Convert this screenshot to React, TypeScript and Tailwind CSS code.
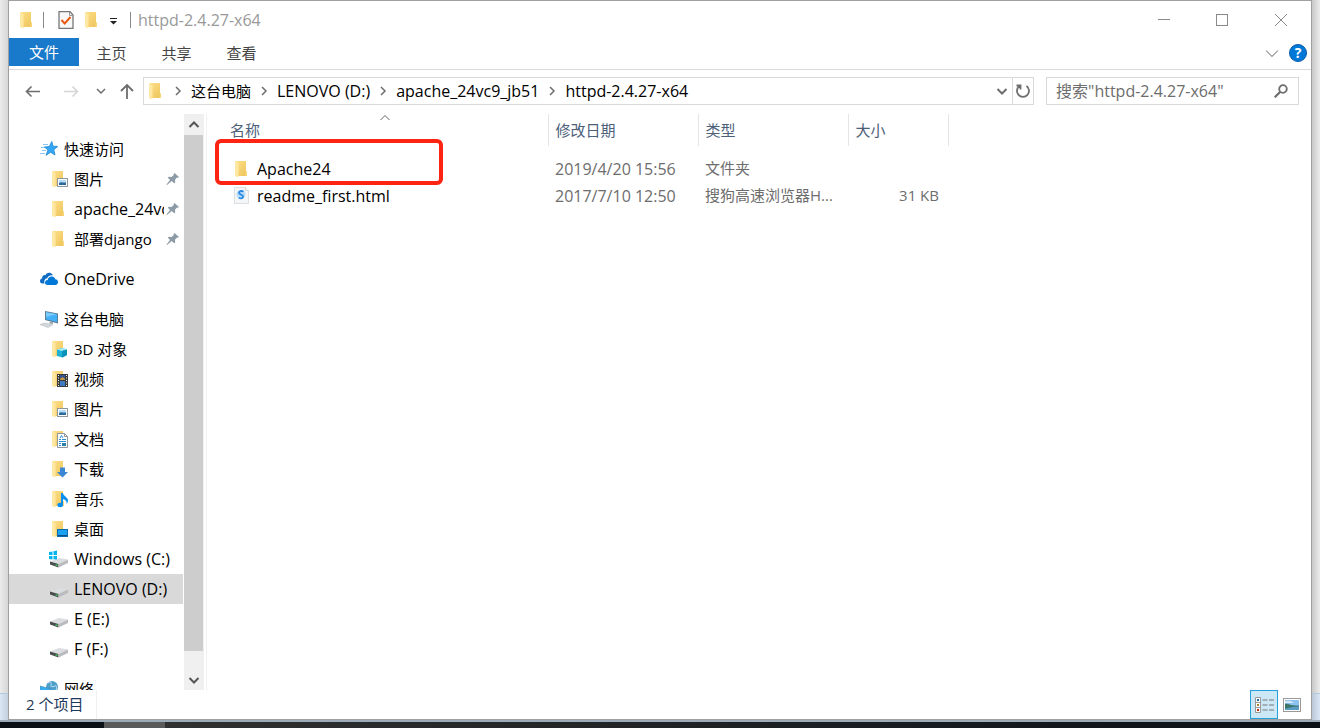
import React, { useState } from 'react';

type Overlay = 'none' | 'picture' | 'cube' | 'film' | 'doc' | 'down' | 'music' | 'desktop';

interface TreeItem {
  id: string;
  label: string;
  icon: React.ReactNode;
  pinned?: boolean;
  latin?: boolean;
}

interface TreeGroup {
  root: TreeItem;
  children: TreeItem[];
}

interface FileRow {
  name: string;
  date: string;
  type: string;
  size: string;
  icon: React.ReactNode;
}

const overlays: Record<Overlay, React.ReactNode> = {
  none: null,
  picture: (
    <g>
      <rect x="7.5" y="8.5" width="10" height="8" fill="#fff" stroke="#8f979e" />
      <rect x="9" y="10" width="7" height="5" fill="#b5dcf8" />
      <path d="M9 13c2-1.500 4 0 7-.5V15H9z" fill="#2d6a9a" />
    </g>
  ),
  cube: (
    <g>
      <path d="M7 9.500l5.500-1.500L17 9.500V15l-4.500 2.500L7 16z" fill="#1fb3d3" />
      <path d="M7 9.500l5.500-1.500L17 9.500l-5 1.500z" fill="#a4ecf5" />
      <path d="M12 11l5-1.500V15l-5 2.500z" fill="#0792b8" />
    </g>
  ),
  film: (
    <g>
      <rect x="7" y="4" width="11" height="13" fill="#3a3a3a" />
      <rect x="10" y="5" width="5" height="5" fill="#33558f" />
      <rect x="10" y="11" width="5" height="5" fill="#3d7cc4" />
      <path d="M10 9l2.500-2 2.500 2v1h-5z" fill="#c7963c" />
      <path d="M8.500 5v12M16.500 5v12" stroke="#fff" strokeDasharray="1 1.500" />
    </g>
  ),
  doc: (
    <g>
      <path d="M7.500 3.500h7l3 3v11h-10z" fill="#fff" stroke="#8f979e" />
      <path d="M14.500 3.500v3h3" fill="none" stroke="#8f979e" />
      <path d="M9 9.500h2M12 9.500h4M9 11.500h7M9 13.500h2M9 15.500h2" stroke="#2a8dd4" />
      <rect x="12" y="13" width="4" height="3" fill="#2b7fa8" />
      <path d="M10 8l1.500-2.500L13 8" fill="none" stroke="#2a8dd4" />
    </g>
  ),
  down: <path d="M10 7.500h5V12h3l-5.500 5.500L7 12h3z" fill="#3c87d3" />,
  music: (
    <g fill="#0a8fee">
      <path d="M11 3h2c0 3 5 4 5 7.500 0 1.500-.7 2.500-1.500 3.500.6-3-1-4-3.500-5v6h-2z" />
      <ellipse cx="10.200" cy="15" rx="2.800" ry="2.200" />
    </g>
  ),
  desktop: (
    <g>
      <rect x="7.500" y="9.500" width="10" height="7" fill="#1ba1f2" stroke="#0c6cae" />
      <path d="M8 15.500h9" stroke="#0a4f88" />
    </g>
  ),
};

const Folder: React.FC<{ overlay?: Overlay }> = ({ overlay = 'none' }) => (
  <svg className="h-[18px] w-[18px] shrink-0" viewBox="0 0 18 18" aria-hidden="true">
    <defs>
      <linearGradient id="folderBody" x1="0" y1="0" x2="1" y2="1">
        <stop offset="0" stopColor="#fddf88" />
        <stop offset="1" stopColor="#edc35a" />
      </linearGradient>
    </defs>
    <path d="M3 1h10v10.500h1V16H3z" fill="url(#folderBody)" />
    <path d="M12.500 11.500H14V16h-1.500z" fill="#f8d679" />
    <path d="M2 1l3.500 2v14.500L2 16z" fill="#ffe8a3" />
    {overlays[overlay]}
  </svg>
);

const Drive: React.FC<{ windows?: boolean }> = ({ windows }) => (
  <svg className="h-[18px] w-[18px] shrink-0 overflow-visible" viewBox="0 0 18 18" aria-hidden="true">
    <path d="M0 11.500l9-3.500 9 1.500-9.500 4.500z" fill="#dcdde0" />
    <path d="M0 11.500l8.500 2.500v3.500L0 14.500z" fill="#4a4c4e" />
    <path d="M8.500 14L18 9.500V13l-9.500 4.500z" fill="#b9bbbe" />
    <path d="M5.500 14.800l2 .6" stroke="#3fd060" strokeWidth="1.300" />
    {windows && (
      <path d="M-1 2l3.500-.6V5H-1zM3.500 1.200L7 .5V5H3.500zM-1 6h3.500v3.400L-1 9zM3.500 6H7v3.600l-3.500-.4z" fill="#00b4f0" />
    )}
  </svg>
);

const Star = () => (
  <svg className="h-[18px] w-[18px] shrink-0" viewBox="0 0 18 18" aria-hidden="true">
    <path d="M3 4.500h5M1 7.500h5M2 10.500h4M0 13.500h5" stroke="#8cc6ee" />
    <path d="M11.800 1.500l1.200 4.700 4.700.3-3.900 3.200 1.200 5.300-4.300-2.700-4.700 3 2-5.300L4.500 7l4.800-.5z" fill="#33a7f5" stroke="#1c86d1" strokeWidth=".8" />
  </svg>
);

const Cloud = () => (
  <svg className="h-[18px] w-[18px] shrink-0" viewBox="0 0 18 18" aria-hidden="true">
    <path d="M2.500 13.500C.8 13.500 0 12.300 0 11c0-1.500 1-2.300 2-2.500C2 6 4 4.800 5.500 5.200 6.600 3 9 2.300 11 3.300c1 .5 1.600 1.200 2 2-3-.4-5 1-5.800 3C5 8.500 3.800 11 4.500 13.500z" fill="#0f6cc4" />
    <path d="M7.500 15C5.800 15 5 13.800 5 12.500 5 11 6.200 10 7.600 10 8 7.500 9.700 6.200 11.800 6.400c1.800.1 3 1.200 3.500 2.900 1.700 0 2.700 1.200 2.700 2.800S16.900 15 15.400 15z" fill="#0078d7" />
  </svg>
);

const Computer = () => (
  <svg className="h-[18px] w-[18px] shrink-0" viewBox="0 0 18 18" aria-hidden="true">
    <path d="M5 1l13 2.500v10L5 10z" fill="#5b7d96" />
    <path d="M6 2.200l11 2.100v7.700L6 9.200z" fill="#43b0f7" />
    <path d="M6 2.200l11 2.100L6 7z" fill="#7bcbfb" />
    <path d="M10 11.500l3 .7v2l-4-1z" fill="#9aa5ad" />
    <path d="M0 14.500L5 13l7.500 2L8 17.500z" fill="#d4d9dd" stroke="#a9b1b7" strokeWidth=".5" />
  </svg>
);

const Network = () => (
  <svg className="h-[18px] w-[18px] shrink-0" viewBox="0 0 18 18" aria-hidden="true">
    <circle cx="12" cy="7" r="6" fill="#4f9fcb" />
    <path d="M8 3c3-2 4 0 3 2s2 2 4 1 2 2 1 4" fill="none" stroke="#c3e4f2" />
    <path d="M0 6l11 3v8L0 14z" fill="#35aef0" stroke="#4c86a8" strokeWidth=".6" />
  </svg>
);

const Pin = () => (
  <svg className="h-3.5 w-3.5 shrink-0" viewBox="0 0 14 14" aria-hidden="true">
    <path d="M8.500 1L13 5l-1.200.8-.8-.2-2 2.200.2 2.700-1 .8-2.500-2.400L1 13l-.5-.5L4 8 1.800 5.800l1-1.100 2.700.2 2.300-2-.2-1z" fill="#8c9ba6" />
  </svg>
);

const HtmlFile = () => (
  <svg className="h-[18px] w-[18px] shrink-0" viewBox="0 0 18 18" aria-hidden="true">
    <path d="M1.500 .5h11l3 3v13h-14z" fill="#f5f6f7" stroke="#dcdfe2" />
    <path d="M12.500 .5v3h3" fill="#fff" stroke="#d0d4d8" />
    <circle cx="8" cy="7.500" r="4.500" fill="#b9dcf8" />
    <path d="M10.500 4.500C7.500 3.200 5 5 6.500 6.700s4.200 1.300 3.500 3.300-2.800 1.600-4.200.8" fill="none" stroke="#2988e0" strokeWidth="1.800" />
  </svg>
);

const Chevron: React.FC<{ d: string; className: string }> = ({ d, className }) => (
  <svg className={className} viewBox="0 0 12 12" fill="none" stroke="currentColor" aria-hidden="true">
    <path d={d} />
  </svg>
);

const RIGHT = 'M4 2l4 4-4 4';
const DOWN = 'M1.500 4L6 8.500 10.500 4';
const UP = 'M1.500 8L6 3.500 10.500 8';

const tree: TreeGroup[] = [
  {
    root: { id: 'quick', label: '快速访问', icon: <Star /> },
    children: [
      { id: 'q-pictures', label: '图片', icon: <Folder overlay="picture" />, pinned: true },
      { id: 'q-apache', label: 'apache_24vc9_jb51', icon: <Folder />, pinned: true, latin: true },
      { id: 'q-django', label: '部署django', icon: <Folder />, pinned: true },
    ],
  },
  { root: { id: 'onedrive', label: 'OneDrive', icon: <Cloud />, latin: true }, children: [] },
  {
    root: { id: 'pc', label: '这台电脑', icon: <Computer /> },
    children: [
      { id: '3d', label: '3D 对象', icon: <Folder overlay="cube" /> },
      { id: 'videos', label: '视频', icon: <Folder overlay="film" /> },
      { id: 'pictures', label: '图片', icon: <Folder overlay="picture" /> },
      { id: 'docs', label: '文档', icon: <Folder overlay="doc" /> },
      { id: 'downloads', label: '下载', icon: <Folder overlay="down" /> },
      { id: 'music', label: '音乐', icon: <Folder overlay="music" /> },
      { id: 'desktop', label: '桌面', icon: <Folder overlay="desktop" /> },
      { id: 'c', label: 'Windows (C:)', icon: <Drive windows />, latin: true },
      { id: 'd', label: 'LENOVO (D:)', icon: <Drive />, latin: true },
      { id: 'e', label: 'E (E:)', icon: <Drive />, latin: true },
      { id: 'f', label: 'F (F:)', icon: <Drive />, latin: true },
    ],
  },
  { root: { id: 'network', label: '网络', icon: <Network /> }, children: [] },
];

const crumbs = [
  { label: '这台电脑', latin: false },
  { label: 'LENOVO (D:)', latin: true },
  { label: 'apache_24vc9_jb51', latin: true },
  { label: 'httpd-2.4.27-x64', latin: true },
];

const files: FileRow[] = [
  { name: 'Apache24', date: '2019/4/20 15:56', type: '文件夹', size: '', icon: <Folder /> },
  { name: 'readme_first.html', date: '2017/7/10 12:50', type: '搜狗高速浏览器H...', size: '31 KB', icon: <HtmlFile /> },
];

const TitleBar = () => (
  <header className="flex h-[37px] shrink-0 items-center pl-[9px]">
    <Folder />
    <span className="ml-[7px] h-4 w-px bg-[#8a8a8a]" />
    <button className="ml-3.5" aria-label="属性">
      <svg className="h-[18px] w-4" viewBox="0 0 16 18" fill="none">
        <path d="M1 .7h11L15 4v13.300H1z" fill="#f8f8f8" stroke="#777" strokeWidth="1.300" />
        <path d="M11.500 1v3.500H15" stroke="#999" />
        <path d="M3.500 9l3.200 3.500L12.500 6" stroke="#ea5a14" strokeWidth="2" />
      </svg>
    </button>
    <button className="ml-[9px]" aria-label="新建文件夹">
      <Folder />
    </button>
    <button className="ml-2 pt-1" aria-label="自定义快速访问工具栏">
      <svg className="h-2 w-[9px]" viewBox="0 0 9 8">
        <path d="M1 0h7v1H1zM1 3h7L4.500 6.500z" fill="#222" />
      </svg>
    </button>
    <span className="ml-3 h-4 w-px bg-[#8a8a8a]" />
    <h1 className="ml-[7px] flex-1 text-base text-[#999]">httpd-2.4.27-x64</h1>
    <div className="flex h-full text-[#8a8a8a]">
      <button className="flex w-[58px] items-center justify-center" aria-label="最小化">
        <span className="h-px w-3 bg-current" />
      </button>
      <button className="flex w-[58px] items-center justify-center" aria-label="最大化">
        <span className="h-3 w-3 border border-current" />
      </button>
      <button className="flex w-[60px] items-center justify-center" aria-label="关闭">
        <Chevron d="M0 0l12 12M12 0L0 12" className="h-3 w-3" />
      </button>
    </div>
  </header>
);

const Ribbon = () => (
  <div className="flex h-8 shrink-0 items-start border-b border-[#dadbdc] text-[15px] text-[#444]">
    <button className="h-7 w-[70px] bg-[#1979ca] text-white">文件</button>
    {['主页', '共享', '查看'].map((tab) => (
      <button key={tab} className="h-[30px] w-[65px]">{tab}</button>
    ))}
    <div className="ml-auto flex h-[30px] items-center gap-2.5 pr-1">
      <button aria-label="展开功能区">
        <Chevron d="M1 4l5 5 5-5" className="h-3.5 w-3.5 text-[#999]" />
      </button>
      <button
        className="h-[18px] w-[18px] rounded-full border border-[#0b5cab] bg-[#0078d7] text-sm leading-4 font-bold text-white"
        aria-label="帮助"
      >
        ?
      </button>
    </div>
  </div>
);

const AddressBar = () => (
  <div className="flex shrink-0 items-center pt-[7px] pr-3 pb-[9px] text-[#6d6d6d]">
    <button className="flex w-12 justify-center" aria-label="后退">
      <svg className="h-4 w-4" viewBox="0 0 16 16" fill="none" stroke="currentColor" strokeWidth="1.600">
        <path d="M15 8.500H1.500M6.500 3.500l-5 5 5 5" />
      </svg>
    </button>
    <button className="flex w-7 justify-center text-[#d5d5d5]" aria-label="前进">
      <svg className="h-4 w-4" viewBox="0 0 16 16" fill="none" stroke="currentColor" strokeWidth="1.600">
        <path d="M1 8.500h13.500M9.500 3.500l5 5-5 5" />
      </svg>
    </button>
    <button className="flex w-8 justify-center" aria-label="最近浏览的位置">
      <Chevron d="M2 4l4 4 4-4" className="h-3 w-3 stroke-[1.5]" />
    </button>
    <button className="mr-1.5 flex w-5 justify-center" aria-label="向上">
      <svg className="h-4 w-4" viewBox="0 0 16 16" fill="none" stroke="currentColor" strokeWidth="1.800">
        <path d="M8 16V2M2 8l6-6 6 6" />
      </svg>
    </button>
    <div className="mr-3 flex h-7 min-w-0 flex-1 items-center border border-[#d9d9d9]">
      <span className="ml-[3px] flex">
        <Folder />
      </span>
      <ol className="flex min-w-0 flex-1 items-center overflow-hidden whitespace-nowrap text-black">
        {crumbs.map((crumb) => (
          <li key={crumb.label} className="flex items-center">
            <span className="flex w-[26px] justify-center">
              <Chevron d={RIGHT} className="h-3 w-3 stroke-[1.5] text-[#6d6d6d]" />
            </span>
            <button className={crumb.latin ? 'text-base' : 'text-[15px]'}>{crumb.label}</button>
          </li>
        ))}
      </ol>
      <button className="flex w-5 justify-center" aria-label="以前的位置">
        <Chevron d={DOWN} className="h-3 w-3 stroke-2" />
      </button>
      <button className="flex h-full w-[21px] items-center justify-center border-l border-[#d9d9d9]" aria-label="刷新">
        <svg className="h-4 w-4" viewBox="0 0 16 16" fill="none" stroke="currentColor" strokeWidth="1.800">
          <path d="M11.500 3a6 6 0 1 1-7 0M1.500 2.500h4v4" />
        </svg>
      </button>
    </div>
    <label className="flex h-7 w-[253px] shrink-0 items-center border border-[#d9d9d9] pr-2.5 pl-[9px]">
      <input
        type="search"
        aria-label="搜索"
        placeholder={'搜索"httpd-2.4.27-x64"'}
        className="min-w-0 flex-1 text-base text-black outline-none placeholder:text-[#6d6d6d]"
      />
      <svg className="h-3.5 w-3.5" viewBox="0 0 14 14" fill="none" stroke="currentColor" strokeWidth="1.800">
        <circle cx="9" cy="5" r="3.800" />
        <path d="M6.300 7.700L.7 13.300" strokeWidth="2.200" />
      </svg>
    </label>
  </div>
);

interface TreeRowProps {
  item: TreeItem;
  nested?: boolean;
  selected: boolean;
  onSelect: (id: string) => void;
}

const TreeRow: React.FC<TreeRowProps> = ({ item, nested, selected, onSelect }) => (
  <button
    onClick={() => onSelect(item.id)}
    className={`flex h-[30px] w-full shrink-0 items-center gap-1.5 text-left whitespace-nowrap text-black ${nested ? 'pl-[41px]' : 'pl-[31px]'} ${selected ? 'bg-[#d9d9d9]' : ''}`}
  >
    {item.icon}
    <span className={`min-w-0 flex-1 overflow-hidden ${item.latin ? 'text-base' : 'text-[15px]'}`}>{item.label}</span>
    {item.pinned && (
      <span className="-ml-1 pr-[3px]">
        <Pin />
      </span>
    )}
  </button>
);

const Sidebar = () => {
  const [selected, setSelected] = useState('d');

  return (
    <aside className="flex w-[198px] shrink-0 border-r border-[#f0f0f0]">
      <nav className="mr-px flex w-[174px] flex-col gap-2.5 overflow-hidden pt-5">
        {tree.map(({ root, children }) => (
          <div key={root.id} className="shrink-0">
            <TreeRow item={root} selected={selected === root.id} onSelect={setSelected} />
            {children.map((item) => (
              <TreeRow key={item.id} item={item} nested selected={selected === item.id} onSelect={setSelected} />
            ))}
          </div>
        ))}
      </nav>
      <div className="flex w-5 flex-col bg-[#f0f0f0] text-[#555]">
        <button className="flex h-[21px] items-center justify-center" aria-label="向上滚动">
          <Chevron d={UP} className="h-3 w-3 stroke-2" />
        </button>
        <div className="mb-[18px] w-[19px] flex-1 bg-[#cdcdcd]" />
        <button className="flex h-[21px] items-center justify-center" aria-label="向下滚动">
          <Chevron d={DOWN} className="h-3 w-3 stroke-2" />
        </button>
      </div>
    </aside>
  );
};

const FileList = () => (
  <main className="relative min-w-0 flex-1 overflow-hidden">
    <table className="w-[741px] table-fixed text-left">
      <thead className="text-[15px] text-[#4c607a]">
        <tr className="h-8">
          <th className="relative w-[341px] border-r border-[#e5e5e5] pl-[23px] font-normal">
            名称
            <span className="absolute top-0 left-0 flex w-full justify-center pl-4">
              <Chevron d="M1.500 6L6 1.500 10.500 6" className="h-3 w-3 text-[#666]" />
            </span>
          </th>
          <th className="w-[150px] border-r border-[#e5e5e5] pl-[7px] font-normal">修改日期</th>
          <th className="w-[150px] border-r border-[#e5e5e5] pl-[7px] font-normal">类型</th>
          <th className="w-[100px] border-r border-[#e5e5e5] pl-[7px] font-normal">大小</th>
        </tr>
      </thead>
      <tbody className="text-base text-[#6d6d6d] before:block before:h-[9px]">
        {files.map((file) => (
          <tr key={file.name} className="h-[27px]">
            <td className="pl-[26px]">
              <span className="flex items-center gap-1.5 text-black">
                {file.icon}
                {file.name}
              </span>
            </td>
            <td className="pl-[7px]">{file.date}</td>
            <td className="pl-[7px] text-[15px] whitespace-nowrap">{file.type}</td>
            <td className="pr-[9px] text-right text-[15px]">{file.size}</td>
          </tr>
        ))}
      </tbody>
    </table>
    {/* highlight over the first row */}
    <div className="absolute top-[25px] left-2 h-[46px] w-[228px] rounded-md border-4 border-[#fd2414]" />
  </main>
);

const StatusBar = () => (
  <footer className="flex h-[29px] shrink-0 items-stretch pr-2.5 text-[15px] text-[#1e395b]">
    <span className="flex w-[88px] items-center border-r border-[#f0f0f0] pl-[17px]">2 个项目</span>
    <button
      className="ml-auto flex w-7 items-center justify-center border border-[#26a0da] bg-[#cce8f6]"
      aria-label="详细信息"
    >
      <svg className="h-[18px] w-[19px]" viewBox="0 0 19 18" fill="none">
        <path d="M.5 1.500h5v15h-5zM.5 6.500h5M.5 11.500h5" fill="#fff" stroke="#999" />
        <path d="M7.500 4h5M14 4h5M7.500 9h5M14 9h5M7.500 14h5M14 14h5" stroke="#777" />
        <path d="M2 3h2v2H2z" fill="#2d6a9a" />
        <path d="M2 8h2v2H2z" fill="#a68330" />
        <path d="M2 13h2v2H2z" fill="#c03016" />
      </svg>
    </button>
    <button className="ml-[5px]" aria-label="大图标">
      <svg className="h-3.5 w-[18px]" viewBox="0 0 18 14">
        <rect x=".5" y=".5" width="17" height="13" fill="#fff" stroke="#999" />
        <rect x="2" y="2" width="14" height="10" fill="#8cc2f0" />
        <path d="M2 3h6l3 2H2z" fill="#d3e9fb" />
        <path d="M2 6c3-1 5 2 14 1.500V12H2z" fill="#3d7468" />
        <path d="M2 10.500c5-1 9-2.500 14-2V12H2z" fill="#5b9cc4" />
      </svg>
    </button>
  </footer>
);

const App: React.FC = () => (
  <div className="flex h-screen flex-col overflow-hidden bg-[#e9e9e9] font-['Open_Sans','Noto_Sans_CJK_SC',sans-serif]">
    <div className="flex min-h-0 flex-1">
      <div className="flex w-2 flex-col">
        <div className="flex-1 bg-linear-to-r from-[#ececec] to-[#d6d6d6]" />
        <div className="h-[27px] border-t border-[#b4c8dc] bg-linear-to-r from-[#dbe7f5] to-[#c3d0de]" />
      </div>
      <div className="flex min-w-0 flex-1 flex-col border border-[#a0a0a0] bg-white">
        <TitleBar />
        <Ribbon />
        <AddressBar />
        <div className="flex min-h-0 flex-1">
          <Sidebar />
          <FileList />
        </div>
        <StatusBar />
      </div>
      <div className="flex w-2 flex-col">
        <div className="flex-1 bg-linear-to-r from-[#c8c8c8] to-[#ececec]" />
        <div className="h-[27px] border-t border-[#b4c8dc] bg-linear-to-r from-[#b9c7d6] to-[#dbe7f5]" />
      </div>
    </div>
    <div className="flex h-2 shrink-0 border-t-2 border-[#9dabb8] bg-[#0b1016]">
      <div className="ml-[104px] w-[61px] bg-[#5a5a5a]" />
      <div className="flex-1 bg-linear-to-r from-[#303030] to-[#0b1016]" />
    </div>
  </div>
);

export default App;
